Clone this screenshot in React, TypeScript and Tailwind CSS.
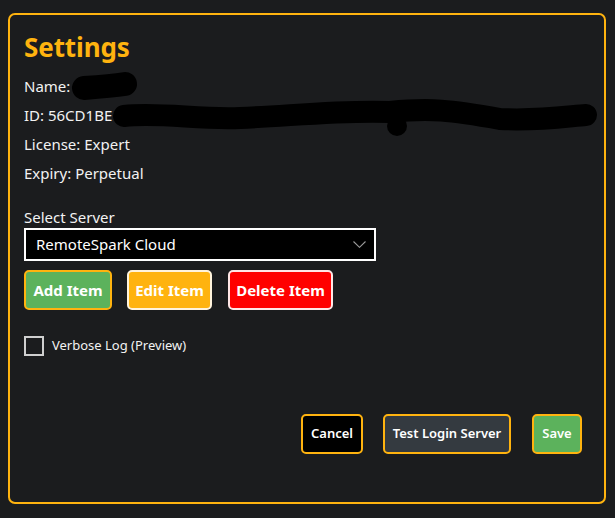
import React from "react";

export default function App() {
  const font = { fontFamily: '"Noto Sans", "Open Sans", sans-serif' };
  return (
    <div className="w-[615px] h-[518px] bg-[#1b1c1e] pt-[13px] pl-[8px] relative overflow-hidden" style={font}>
      <div className="w-[598px] h-[491px] border-2 border-[#ffb30f] rounded-[7px] pl-[14px] pt-[16px] text-[#f2f2f2]">
        <div className="text-[26px] leading-[32px] font-bold text-[#ffb30f] tracking-[-0.1px]">Settings</div>
        <div className="mt-[9px] text-[15px] leading-[29px]">
          <div>Name:</div>
          <div>ID: 56CD1BE</div>
          <div>License: Expert</div>
          <div>Expiry: Perpetual</div>
        </div>
        <div className="mt-[19px] text-[15px] leading-[20px]">Select Server</div>
        <div className="mt-[1px] w-[352px] h-[33px] border-2 border-white bg-black flex items-center justify-between pl-[10px] pr-[8px]">
          <span className="text-[15px] text-white">RemoteSpark Cloud</span>
          <svg width="13" height="7" viewBox="0 0 13 7" fill="none" stroke="#9a9a9a" strokeWidth="1.1">
            <path d="M0.5 0.5 L6.5 6.3 L12.5 0.5" />
          </svg>
        </div>
        <div className="mt-[9px] flex gap-0">
          <button className="w-[88px] h-[40px] rounded-[5px] border-2 border-[#ffb30f] bg-[#5cb25c] text-white font-bold text-[15px]">Add Item</button>
          <button className="ml-[15px] w-[85px] h-[40px] rounded-[5px] border-2 border-[#fff3dc] bg-[#ffb30f] text-white font-bold text-[15px]">Edit Item</button>
          <button className="ml-[16px] w-[105px] h-[40px] rounded-[5px] border-2 border-[#ffe6e6] bg-[#ff0000] text-white font-bold text-[15px]">Delete Item</button>
        </div>
        <div className="mt-[26px] flex items-center">
          <div className="w-[20px] h-[20px] border-2 border-[#cfcfcf]"></div>
          <span className="ml-[8px] text-[13px]">Verbose Log (Preview)</span>
        </div>
        <div className="mt-[58px] flex justify-end pr-[22px]">
          <button className="w-[62px] h-[40px] rounded-[5px] border-2 border-[#ffb30f] bg-black text-white font-semibold text-[13px]">Cancel</button>
          <button className="ml-[20px] w-[128px] h-[40px] rounded-[5px] border-2 border-[#ffb30f] bg-[#343a40] text-white font-semibold text-[13px]">Test Login Server</button>
          <button className="ml-[21px] w-[50px] h-[40px] rounded-[5px] border-2 border-[#ffb30f] bg-[#5cb25c] text-white font-semibold text-[13px]">Save</button>
        </div>
      </div>
      <svg className="absolute left-0 top-0 pointer-events-none" width="615" height="518" viewBox="0 0 615 518">
        <path d="M84 88 C 98 87, 112 86, 125 84" stroke="#000" strokeWidth="24" strokeLinecap="round" fill="none" />
        <path d="M124 116 C 160 112, 200 120, 240 118 C 290 116, 340 110, 390 112 C 430 108, 450 110, 500 119 C 540 121, 570 116, 586 115" stroke="#000" strokeWidth="22" strokeLinecap="round" fill="none" />
        <circle cx="397" cy="126" r="10" fill="#000" />
      </svg>
    </div>
  );
}
